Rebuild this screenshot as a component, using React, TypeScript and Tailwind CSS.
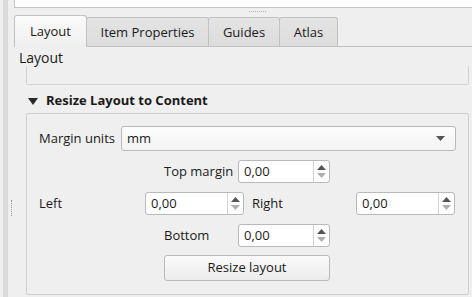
import React from "react";

const FONT = { fontFamily: '"Open Sans", "Noto Sans", sans-serif' };

function Tab({ label, active, w }: { label: string; active?: boolean; w: string }) {
  if (active) {
    return (
      <div
        className={`${w} h-[32px] -mr-px flex items-center justify-center rounded-t-[3px] border border-b-0 border-[#c2c2c2] bg-gradient-to-b from-[#fbfbfb] to-[#efefef] text-[13px] text-[#1a1a1a] relative z-10`}
      >
        {label}
      </div>
    );
  }
  return (
    <div
      className={`${w} h-[30px] -mr-px flex items-center justify-center rounded-t-[3px] border border-b-0 border-[#c2c2c2] bg-gradient-to-b from-[#e4e4e4] to-[#dcdcdc] text-[13px] text-[#1a1a1a]`}
    >
      {label}
    </div>
  );
}

function SpinBox({ w }: { w: string }) {
  return (
    <div className={`${w} h-[23px] flex rounded-[3px] border border-[#b9b9b9] bg-white`}>
      <div className="flex-1 flex items-center pl-[5px] text-[13px] text-[#1a1a1a]">0,00</div>
      <div className="w-[16px] flex flex-col items-center justify-center gap-[3px] border-l border-[#d4d4d4]">
        <svg width="9" height="5" viewBox="0 0 9 5">
          <path d="M4.5 0 L9 5 L0 5 Z" fill="#555555" />
        </svg>
        <svg width="9" height="5" viewBox="0 0 9 5">
          <path d="M0 0 L9 0 L4.5 5 Z" fill="#b0b0b0" />
        </svg>
      </div>
    </div>
  );
}

export default function App() {
  return (
    <div
      className="w-[472px] h-[297px] overflow-hidden flex bg-[#efefef] text-[13px] text-[#1a1a1a]"
      style={FONT}
    >
      {/* left splitter strip */}
      <div className="w-[14px] h-full flex shrink-0">
        <div className="w-[3px] h-full" />
        <div className="w-[5px] h-full bg-[#dadada]" />
        <div className="flex-1 h-full flex flex-col items-center pt-[200px]">
          <div className="h-[16px] border-l border-dotted border-[#9a9a9a]" />
        </div>
      </div>

      <div className="flex-1 flex flex-col min-w-0">
        {/* top input edge */}
        <div className="h-[8px] bg-white border-l border-b border-[#c4c4c4]" />
        <div className="h-[7px] flex items-center pl-[235px]">
          <div className="w-[17px] border-t border-dotted border-[#b0b0b0]" />
        </div>

        {/* tabs */}
        <div className="flex items-end">
          <Tab label="Layout" active w="w-[73px]" />
          <Tab label="Item Properties" w="w-[123px]" />
          <Tab label="Guides" w="w-[72px]" />
          <Tab label="Atlas" w="w-[59px]" />
        </div>

        {/* pane */}
        <div className="flex-1 border-t border-[#c2c2c2] -mt-px flex flex-col">
          <div className="pl-[5px] pt-[1px] h-[19px] text-[14px] leading-[19px]">Layout</div>
          <div className="ml-[12px] mr-[3px] h-[19px] shrink-0 border border-t-0 border-[#d2d2d2] rounded-b-[2px]" />

          <div className="h-[28px] shrink-0 flex items-center pt-[4px] pl-[14px] gap-[8px]">
            <svg width="10" height="7" viewBox="0 0 10 7">
              <path d="M0 0 L10 0 L5 7 Z" fill="#2a2a2a" />
            </svg>
            <span className="font-bold text-[13px]">Resize Layout to Content</span>
          </div>

          <div className="ml-[12px] mr-[3px] h-[182px] shrink-0 border border-[#cfcfcf] rounded-[2px] flex flex-col pt-[12px]">
            <div className="flex items-center h-[25px]">
              <div className="w-[94px] pl-[12px]">Margin units</div>
              <div className="w-[335px] h-[25px] flex items-center justify-between rounded-[3px] border border-[#b9b9b9] bg-gradient-to-b from-[#fdfdfd] to-[#f3f3f3] pl-[5px] pr-[10px]">
                <span>mm</span>
                <svg width="9" height="5" viewBox="0 0 9 5">
                  <path d="M0 0 L9 0 L4.5 5 Z" fill="#555555" />
                </svg>
              </div>
            </div>

            <div className="flex items-center h-[23px] mt-[9px] pl-[137px]">
              <div className="w-[74px]">Top margin</div>
              <SpinBox w="w-[92px]" />
            </div>

            <div className="flex items-center h-[23px] mt-[9px]">
              <div className="w-[118px] pl-[12px]">Left</div>
              <SpinBox w="w-[99px]" />
              <div className="w-[112px] pl-[8px]">Right</div>
              <SpinBox w="w-[99px]" />
            </div>

            <div className="flex items-center h-[23px] mt-[9px] pl-[137px]">
              <div className="w-[74px]">Bottom</div>
              <SpinBox w="w-[92px]" />
            </div>

            <div className="mt-[8px] ml-[137px] w-[166px] h-[26px] flex items-center justify-center rounded-[3px] border border-[#b9b9b9] bg-gradient-to-b from-[#fafafa] to-[#ececec]">
              Resize layout
            </div>
          </div>
        </div>
      </div>
    </div>
  );
}
